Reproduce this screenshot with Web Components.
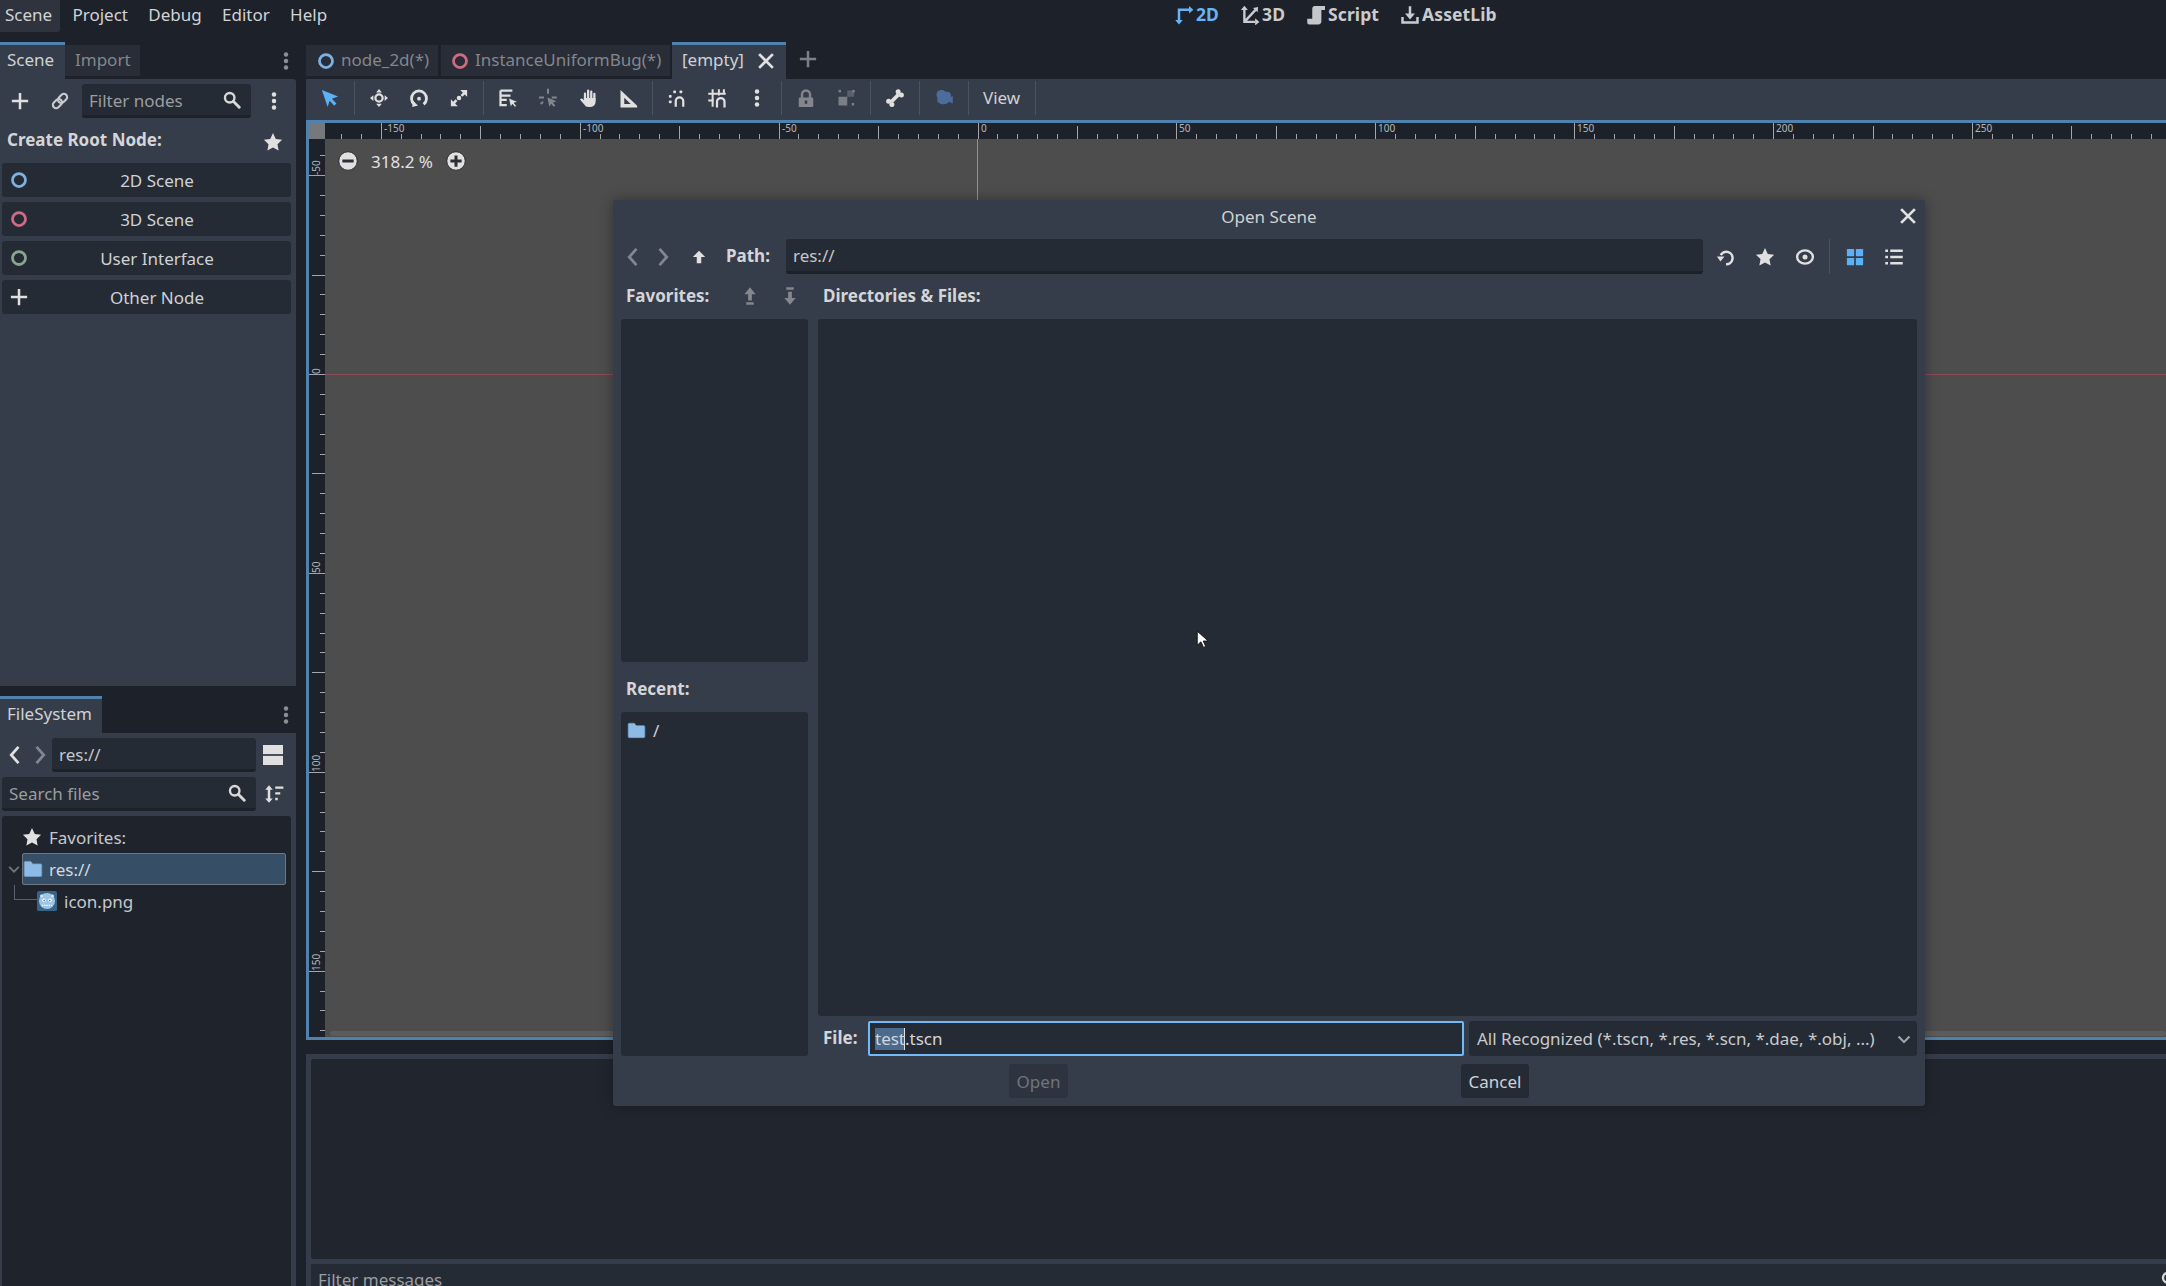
<!DOCTYPE html>
<html><head><meta charset="utf-8">
<style>
html,body{margin:0;padding:0;background:#1d222a;overflow:hidden}
body{font:17px/1.2 "Noto Sans",sans-serif;color:#cdcfd2}
</style></head><body>
<ge-app></ge-app>
<script>
const ICONS={
plus:'<path fill="C" d="M7 1.500h2v5.500h5.500v2H9v5.500H7V9H1.500V7H7z"/>',
link:'<g transform="rotate(-45 8 8)" fill="none" stroke="C" stroke-width="1.700"><rect x="1" y="5.400" width="8.200" height="5.200" rx="2.600"/><rect x="6.800" y="5.400" width="8.200" height="5.200" rx="2.600"/></g>',
search:'<circle cx="6.500" cy="6.500" r="4" fill="none" stroke="C" stroke-width="2"/><path d="M9.500 9.500l5 5" stroke="C" stroke-width="2.400" stroke-linecap="round"/>',
dots:'<circle cx="8" cy="2.800" r="1.800" fill="C"/><circle cx="8" cy="8" r="1.800" fill="C"/><circle cx="8" cy="13.200" r="1.800" fill="C"/>',
star:'<path fill="C" d="M8 .8l2.200 4.700 5.100.7-3.700 3.500.9 5.100L8 12.400l-4.500 2.400.9-5.100L.7 6.200l5.100-.7z"/>',
ring:'<circle cx="8" cy="8" r="5.200" fill="none" stroke="C" stroke-width="2.200"/>',
select:'<path fill="C" d="M1.500 1.500l13 5.200-5 1.800 3.600 3.900-1.700 1.700-3.700-3.900-1.600 5z"/>',
move:'<path fill="C" d="M8 .8l2.300 2.700H5.700zM8 15.200l2.300-2.700H5.700zM.8 8l2.700-2.300v4.600zM15.200 8l-2.700-2.300v4.600z"/><circle cx="8" cy="8" r="2.900" fill="none" stroke="C" stroke-width="1.800"/>',
rotate:'<path fill="none" stroke="C" stroke-width="2.200" d="M11.700 13.100a6 6 0 1 0-7.400 0"/><path fill="C" d="M2.600 15.200l.5-5 4.100 3.700z"/><circle cx="8" cy="8.500" r="1.500" fill="C"/>',
scale:'<path fill="C" d="M9 1.500h5.500V7l-1.900-1.900L10.700 7 9.300 5.600l1.800-1.900zM7 14.500H1.500V9l1.900 1.900L5.300 9l1.400 1.400-1.800 1.900z"/><circle cx="8" cy="8" r="1.800" fill="C"/>',
listsel:'<path fill="none" stroke="C" stroke-width="1.800" d="M2 2h9.500M2 2v11.600h5M2 6h8M2 9.500h5"/><path fill="C" stroke="#363d4a" stroke-width=".6" d="M8.500 8l7.300 3-2.900 1 1.900 2.400-1.300 1-1.900-2.400-1.500 2.400z"/>',
pivot:'<path stroke="C" stroke-width="1.600" d="M8 .5v4M.8 7.500h4M11 7.500h4"/><path fill="C" d="M7.500 7.500l7.300 3-2.900 1 1.900 2.400-1.300 1-1.900-2.400-1.500 2.400z"/><path stroke="C" stroke-width="1.600" d="M4 11l-1.800 1.800"/>',
pan:'<path fill="none" stroke="C" stroke-width="1.800" stroke-linecap="round" d="M5.600 9V4.400M8.100 9V2M10.600 9V2.800M13.100 10V4.600"/><path fill="C" d="M4.700 8h9.300v3.300a3.800 3.800 0 0 1-3.800 3.800H8.400c-1.700 0-2.400-.7-3.200-1.800L2 9.800c-.7-1 .6-2 1.500-1.200l1.200 1.100z"/>',
triangle:'<path fill="C" fill-rule="evenodd" d="M2 1.500l13.300 12.700v1.400H2zM5 7.700v5h5.200z"/>',
snap:'<path fill="none" stroke="C" stroke-width="1.800" d="M7 15v-4.500a3 3 0 0 1 6 0V15"/><g fill="C"><rect x="5" y="2" width="2.200" height="2.200" rx=".6"/><rect x="10" y="2" width="2.200" height="2.200" rx=".6"/><rect x="1.500" y="5.500" width="2.200" height="2.200" rx=".6"/><rect x="1.500" y="10" width="2.200" height="2.200" rx=".6"/></g>',
grid:'<path fill="none" stroke="C" stroke-width="1.600" d="M4.500 1v14M9.500 1v5M13.500 1v3.500M1 4.500h14M1 10h4.500"/><path fill="none" stroke="C" stroke-width="1.800" d="M8 15.500v-4.500a3 3 0 0 1 6 0v4.500"/>',
lock:'<path fill="C" fill-rule="evenodd" d="M3 7.500h10a.8.8 0 0 1 .8.800v6a.8.8 0 0 1-.8.800H3a.8.8 0 0 1-.8-.8v-6a.8.8 0 0 1 .8-.8zM7 10v2.500h2V10z"/><path fill="none" stroke="C" stroke-width="1.900" d="M4.800 8V5.200a3.200 3.200 0 0 1 6.400 0V8"/>',
group:'<g fill="C"><rect x="2" y="7" width="7" height="7"/><rect x="9" y="2" width="5.500" height="5" opacity=".55"/><rect x="2" y="1.500" width="2" height="2"/><rect x="12.500" y="12" width="2" height="2"/><rect x="13" y="1.500" width="2" height="2"/></g>',
bone:'<g fill="C"><path d="M4 9.900L9.900 4 12 6.100 6.100 12z"/><circle cx="10.500" cy="2.900" r="2"/><circle cx="13.100" cy="5.500" r="2"/><circle cx="2.900" cy="10.500" r="2"/><circle cx="5.500" cy="13.100" r="2"/></g>',
camera:'<g fill="C"><circle cx="6" cy="5.500" r="4"/><circle cx="10.500" cy="6" r="3"/><ellipse cx="7.500" cy="9.500" rx="5" ry="3.500"/><path d="M11 8.500l4-2.200v6l-4-2z"/></g>',
m2d:'<path fill="none" stroke="C" stroke-width="2" d="M4 13V3.800h8"/><path fill="C" d="M12 .8l3.500 3-3.500 3zM1 12h6l-3 3.500z"/>',
m3d:'<path fill="none" stroke="C" stroke-width="1.900" d="M3.500 4v9.500H12M3.500 13.500L12.800 3.500"/><path fill="C" d="M3.500.5l2.800 3.400H.7zM15.500 13.500l-3.400 2.800v-5.600zM14.500 1.500l-.4 4.300-3.700-3.400z"/>',
script:'<path fill="C" d="M6.500 .8H15.200V4H12.300V13A2.500 2.500 0 0 1 9.800 15.500H2.500A1.500 1.500 0 0 1 1 14V11H5V3A2.300 2.300 0 0 1 6.500 .8z"/>',
asset:'<path fill="none" stroke="C" stroke-width="2" d="M8 1v9M2 9.500V14h12V9.500"/><path fill="C" d="M4 6.800h8L8 11.500z"/>',
folder:'<path fill="#8dbbe6" stroke="#6c9ccb" stroke-width=".6" d="M1 2.800a.9.9 0 0 1 .9-.9h4.300l1.600 2h6.300a.9.9 0 0 1 .9.900v8.300a.9.900 0 0 1-.9.900H1.900a.9.900 0 0 1-.9-.9z"/>',
left:'<path fill="none" stroke="C" stroke-width="2.200" d="M10.800 1.500L5 8l5.800 6.500"/>',
right:'<path fill="none" stroke="C" stroke-width="2.200" d="M5.200 1.500L11 8l-5.800 6.500"/>',
split:'<rect width="16" height="7.300" fill="C"/><rect y="8.700" width="16" height="7.300" fill="C"/>',
sort:'<path fill="C" d="M4 1l3 3.500H5v7h2L4 15l-3-3.500h2v-7H1zM9 2h6.500v1.800H9zM9 6.500h4v1.800H9zM9 11h2v2H9z"/>',
down:'<path fill="none" stroke="C" stroke-width="2.200" d="M2.500 5.500L8 11l5.500-5.500"/>',
x:'<path stroke="C" stroke-width="2.200" d="M2.500 2.500l11 11M13.500 2.500l-11 11"/>',
up:'<path fill="C" d="M8 2.500l5.500 5.500H10v5.500H6V8H2.500z"/>',
favup:'<path fill="C" d="M8 1l4.500 5.500H9.500v5h-3v-5H3.500zM5 13h6v2H5z"/>',
favdown:'<path fill="C" d="M8 15l4.500-5.500H9.500v-5h-3v5H3.500zM5 1h6v2H5z"/>',
refresh:'<path fill="none" stroke="C" stroke-width="2" d="M3.800 6.500A5 5 0 1 1 8 13.800"/><path fill="C" d="M.8 7.600h6L3.500 11.500z"/>',
eye:'<ellipse cx="8" cy="8" rx="6.300" ry="5.300" fill="none" stroke="C" stroke-width="1.900"/><circle cx="8" cy="8" r="2" fill="C"/>',
tiles:'<g fill="C"><rect x="1.500" y="1.500" width="5.800" height="5.800" rx=".5"/><rect x="8.700" y="1.500" width="5.800" height="5.800" rx=".5"/><rect x="1.500" y="8.700" width="5.800" height="5.800" rx=".5"/><rect x="8.700" y="8.700" width="5.800" height="5.800" rx=".5"/></g>',
list:'<path fill="C" d="M1 2h2.200v2H1zM5 2h10v2H5zM1 7h2.200v2H1zM5 7h10v2H5zM1 12h2.200v2H1zM5 12h10v2H5z"/>',
godot:'<rect width="16" height="16" rx="1.500" fill="#3a6186"/><circle cx="8" cy="8" r="6.400" fill="#9cc5e6"/><circle cx="3.600" cy="3.900" r="1.100" fill="#dcecf8"/><circle cx="12.400" cy="3.900" r="1.100" fill="#dcecf8"/><circle cx="5.600" cy="7.400" r="1.400" fill="#fff"/><circle cx="10.400" cy="7.400" r="1.400" fill="#fff"/><circle cx="5.800" cy="7.500" r=".6" fill="#3a6186"/><circle cx="10.200" cy="7.500" r=".6" fill="#3a6186"/><path stroke="#fff" stroke-dasharray="1 .8" stroke-width="1" d="M4 11.500h8"/>',
cursor:'<path fill="#fff" stroke="#111" stroke-width=".8" d="M2 1l0 12.500 3.300-3 2.300 5 1.900-.9-2.200-4.800h4.400z"/>',
zminus:'<circle cx="8" cy="8" r="7.400" fill="#e0e0e0" stroke="#222" stroke-width=".7"/><rect x="3.500" y="6.800" width="9" height="2.400" fill="#2a2e35"/>',
zplus:'<circle cx="8" cy="8" r="7.400" fill="#e0e0e0" stroke="#222" stroke-width=".7"/><path fill="#2a2e35" d="M6.800 3.500h2.400v3.300h3.300v2.400H9.200v3.300H6.800V9.200H3.500V6.800h3.300z"/>'
};
class GeEl extends HTMLElement{
  constructor(){super();this.attachShadow({mode:'open'});const h=this.constructor.html;
    if(h)this.shadowRoot.innerHTML=h;}
}
function def(name,html){customElements.define(name,class extends GeEl{static html=html});}

customElements.define('ge-icon',class extends GeEl{
  connectedCallback(){
    const n=this.getAttribute('n'),c=this.getAttribute('c')||'#e0e0e0',s=this.getAttribute('s')||20,o=this.getAttribute('o')||1;
    this.shadowRoot.innerHTML=`<style>:host{display:inline-flex;align-items:center;justify-content:center;flex:none;width:${s}px;height:${s}px;opacity:${o}}svg{display:block}</style><svg width="${s}" height="${s}" viewBox="0 0 16 16">${(ICONS[n]||'').replace(/"C"/g,'"'+c+'"')}</svg>`;
  }
});

def('ge-ib',`<style>:host{display:flex;align-items:center;justify-content:center;flex:none;width:var(--w,40px);height:100%}</style><slot></slot>`);
def('ge-sep',`<style>:host{display:block;flex:none;width:1px;margin:2px 4px;background:#4c5360}</style>`);

def('ge-menu-item',`<style>:host{display:flex;align-items:center;height:32px;box-sizing:border-box;padding:0 8px 2px 5px;color:#d2d3d6;flex:none}
:host([hover]){background:#2e333d;border-radius:0 0 3px 0}</style><slot></slot>`);
def('ge-mode',`<style>:host{display:flex;align-items:center;gap:2px;height:29px;font-weight:700;font-size:17.5px;letter-spacing:.1px;color:var(--col,#c9cbce);flex:none}</style><slot></slot>`);
def('ge-topbar',`<style>:host{display:flex;height:42px;align-items:flex-start;background:#1d222a}
.menu{display:flex;width:1174px;gap:7.300px;flex:none}.modes{display:flex;gap:21px}</style>
<div class="menu"><ge-menu-item hover>Scene</ge-menu-item><ge-menu-item>Project</ge-menu-item><ge-menu-item>Debug</ge-menu-item><ge-menu-item>Editor</ge-menu-item><ge-menu-item>Help</ge-menu-item></div>
<div class="modes"><ge-mode style="--col:#66b4f5"><ge-icon n="m2d" c="#66b4f5"></ge-icon>2D</ge-mode><ge-mode><ge-icon n="m3d" c="#c9cbce"></ge-icon>3D</ge-mode><ge-mode><ge-icon n="script" c="#c4c6c9"></ge-icon>Script</ge-mode><ge-mode><ge-icon n="asset" c="#c9cbce"></ge-icon>AssetLib</ge-mode></div>`);

def('ge-tab',`<style>:host{display:flex;align-items:center;box-sizing:border-box;flex:none;height:31px;margin-top:3px;background:#282d37;color:#83868c;padding:0 var(--pr,10px) 0 var(--pl,10px);white-space:nowrap;gap:var(--gap,5px);width:var(--tw,auto)}
:host([on]){height:37px;margin-top:0;background:#363d4a;border-top:3px solid #4f82ae;color:#cfd1d4;padding-bottom:3px}</style><slot></slot>`);

def('ge-field',`<style>:host{display:flex;align-items:center;box-sizing:border-box;height:var(--h,34px);background:#252b34;border-bottom:3px solid #1d222a;border-radius:3px;padding:0 10px 0 7px;color:var(--fc,#c4c6ca);min-width:0;flex:var(--flex,none);width:var(--w,auto)}
.t{flex:1;white-space:nowrap;margin-top:var(--tm,4px)}</style><div class="t"><slot></slot></div><slot name="end"></slot>`);

def('ge-root-btn',`<style>:host{display:flex;align-items:center;height:34px;background:#252b34;border-radius:3px;padding:0 6px 0 7px;color:#cfd1d4;flex:none}
.t{flex:1;text-align:center;margin-top:2px}</style><slot name="i"></slot><div class="t"><slot></slot></div>`);

def('ge-scene-dock',`<style>:host{display:block;height:644px;flex:none}
.tabs{display:flex;height:37px;position:relative;align-items:flex-start}
.tabs ge-ib{margin-left:auto;height:31px;margin-top:3px;--w:20px;margin-right:0;padding-right:0}
.p{background:#363d4a;height:607px;display:flex;flex-direction:column;border-radius:0 3px 0 0}
.r{display:flex;height:34px;margin-top:5px;align-items:center}
.r ge-ib{height:34px}
.h{display:flex;align-items:center;justify-content:space-between;height:45px;box-sizing:border-box;padding:0 0 1px 7px;font-weight:700;color:#d4d5d8}
.l{display:flex;flex-direction:column;gap:5px;margin:0 5px 0 2px}
</style>
<div class="tabs"><ge-tab on style="--tw:65px;--pl:7px">Scene</ge-tab><ge-tab style="--tw:75px;--pl:10px">Import</ge-tab><ge-ib style="margin-right:0"><ge-icon n="dots" c="#8b8e93"></ge-icon></ge-ib><div style="width:0"></div></div>
<div class="p">
<div class="r"><ge-ib><ge-icon n="plus"></ge-icon></ge-ib><ge-ib><ge-icon n="link" c="#c8cacd"></ge-icon></ge-ib><ge-field style="margin-left:2px;--w:169px;--fc:#9a9da2">Filter nodes<ge-icon slot="end" n="search" c="#d8d8d8" s="19"></ge-icon></ge-field><ge-ib style="--w:45px"><ge-icon n="dots"></ge-icon></ge-ib></div>
<div class="h"><span>Create Root Node:</span><ge-ib style="--w:46px;height:20px;margin-top:3px"><ge-icon n="star"></ge-icon></ge-ib></div>
<div class="l">
<ge-root-btn><ge-icon slot="i" n="ring" c="#7eb0e2"></ge-icon>2D Scene</ge-root-btn>
<ge-root-btn><ge-icon slot="i" n="ring" c="#cf6c84"></ge-icon>3D Scene</ge-root-btn>
<ge-root-btn><ge-icon slot="i" n="ring" c="#8ba58c"></ge-icon>User Interface</ge-root-btn>
<ge-root-btn><ge-icon slot="i" n="plus"></ge-icon>Other Node</ge-root-btn>
</div></div>`);

def('ge-fs-dock',`<style>:host{display:block;flex:1;min-height:0}
.tabs{display:flex;height:37px;align-items:flex-start}
.tabs ge-ib{margin-left:auto;height:31px;margin-top:3px;--w:20px}
.p{background:#363d4a;height:553px;display:flex;flex-direction:column}
.r{display:flex;height:34px;align-items:center;margin-top:5px}
.r ge-ib{height:34px}
.tree{margin:5px 5px 0 2px;flex:1;background:#1f242c;border-radius:3px 3px 0 0;color:#c6c8cc;padding-top:5px;box-sizing:border-box}
.tree span{margin-top:2px}
.row{display:flex;align-items:center;height:32px}
.sel{display:flex;align-items:center;box-sizing:border-box;width:264px;height:32px;margin-left:1px;background:#364e66;border:1px solid #6d7680;border-radius:2px}
.g{width:23px;height:15px;margin-left:12px;border-left:1px solid #59606b;border-bottom:1px solid #59606b;box-sizing:border-box;align-self:flex-start}
</style>
<div class="tabs"><ge-tab on style="--tw:102px;--pl:7px">FileSystem</ge-tab><ge-ib><ge-icon n="dots" c="#8b8e93"></ge-icon></ge-ib></div>
<div class="p">
<div class="r"><ge-ib style="--w:25px;margin-left:2px"><ge-icon n="left"></ge-icon></ge-ib><ge-ib style="--w:25px"><ge-icon n="right" o=".45"></ge-icon></ge-ib><ge-field style="--w:204px">res://</ge-field><ge-ib style="--w:40px;margin-left:-3px"><ge-icon n="split"></ge-icon></ge-ib></div>
<div class="r"><ge-field style="margin-left:2px;--w:254px;--fc:#9a9da2">Search files<ge-icon slot="end" n="search" c="#d8d8d8" s="19"></ge-icon></ge-field><ge-ib style="--w:36px"><ge-icon n="sort"></ge-icon></ge-ib></div>
<div class="tree">
<div class="row" style="padding-left:20px;height:32px"><ge-icon n="star"></ge-icon><span style="margin-left:7px">Favorites:</span></div>
<div class="row"><ge-icon n="down" s="14" c="#6e747d" style="margin-left:5px"></ge-icon><div class="sel"><ge-icon n="folder"></ge-icon><span style="margin-left:6px;color:#d6d8da">res://</span></div></div>
<div class="row"><div class="g"></div><ge-icon n="godot"></ge-icon><span style="margin-left:7px">icon.png</span></div>
</div></div>`);

customElements.define('ge-ruler',class extends GeEl{
  connectedCallback(){
    const v=this.hasAttribute('vertical'),o=+this.getAttribute('origin'),len=+this.getAttribute('len');
    const step=19.89;let out='';
    for(let k=Math.ceil(-o/step);k*step+o<len;k++){
      const p=Math.round(k*step+o),mj=k%10==0,md=k%5==0;const sz=mj?16:md?13:5;
      if(v){out+=`<i style="top:${p}px;right:0;width:${sz}px;height:1px"></i>`;
        if(mj)out+=`<b class="vl" style="top:${p-24}px;">${k*5}</b>`;}
      else{out+=`<i style="left:${p}px;bottom:0;height:${sz}px;width:1px"></i>`;
        if(mj&&p<len-30)out+=`<b style="left:${p+3}px;top:0">${k*5}</b>`;}
    }
    this.shadowRoot.innerHTML=`<style>:host{display:block;position:relative;overflow:hidden;background:#1d222a;flex:none;${v?'width:16px;height:100%':'height:16px;flex:1'}}
i{position:absolute;background:#a3a5a8}
b{position:absolute;font:400 10px/11px "Noto Sans",sans-serif;color:#b4b6b9;white-space:nowrap}
.vl{left:1px;height:24px;width:12px;writing-mode:vertical-rl;transform:rotate(180deg);line-height:12px;text-align:left}</style>${out}`;
  }
});

def('ge-toolbar',`<style>:host{display:flex;height:41px;padding-left:4px;background:#363d4a;flex:none;align-items:stretch}
ge-sep{height:34px;margin-top:2px}
ge-ib{height:38px}
.v{display:flex;align-items:center;padding:1px 10px 0;box-sizing:content-box;height:37px;color:#cfd1d4}</style>
<ge-ib><ge-icon n="select" c="#5cb0f5"></ge-icon></ge-ib><ge-sep></ge-sep>
<ge-ib><ge-icon n="move"></ge-icon></ge-ib><ge-ib><ge-icon n="rotate"></ge-icon></ge-ib><ge-ib><ge-icon n="scale"></ge-icon></ge-ib><ge-sep></ge-sep>
<ge-ib><ge-icon n="listsel"></ge-icon></ge-ib><ge-ib><ge-icon n="pivot" o=".45"></ge-icon></ge-ib><ge-ib><ge-icon n="pan"></ge-icon></ge-ib><ge-ib><ge-icon n="triangle"></ge-icon></ge-ib><ge-sep></ge-sep>
<ge-ib><ge-icon n="snap"></ge-icon></ge-ib><ge-ib><ge-icon n="grid"></ge-icon></ge-ib><ge-ib><ge-icon n="dots"></ge-icon></ge-ib><ge-sep></ge-sep>
<ge-ib><ge-icon n="lock" o=".45"></ge-icon></ge-ib><ge-ib><ge-icon n="group" o=".4"></ge-icon></ge-ib><ge-sep></ge-sep>
<ge-ib><ge-icon n="bone"></ge-icon></ge-ib><ge-sep></ge-sep>
<ge-ib><ge-icon n="camera" c="#4c6d9c"></ge-icon></ge-ib><ge-sep></ge-sep>
<div class="v" style="width:38px">View</div><ge-sep></ge-sep>`);

def('ge-viewport',`<style>:host{display:flex;flex-direction:column;height:920px;box-sizing:border-box;border:solid #4f82ae;border-width:3px 0 3px 3px;flex:none}
.top{display:flex;height:16px;flex:none}.corner{width:16px;background:#77787c;flex:none}
.main{display:flex;flex:1;min-height:0}
.cv{flex:1;background:#4d4d4d;position:relative;overflow:hidden}
.ox{position:absolute;left:652px;top:0;bottom:0;width:1px;background:#8c9c72}
.oy{position:absolute;left:0;right:0;top:235px;height:1px;background:#8c4a58}
.zoom{position:absolute;left:13px;top:12px;display:flex;align-items:center;height:20px;color:#e0e0e0}
.sb{position:absolute;left:5px;right:0;bottom:1px;height:5px;background:#5c5c5c;border-radius:3px}</style>
<div class="top"><div class="corner"></div><ge-ruler origin="652.500" len="1841"></ge-ruler></div>
<div class="main"><ge-ruler vertical origin="235" len="898"></ge-ruler><div class="cv"><div class="ox"></div><div class="oy"></div>
<div class="zoom"><ge-icon n="zminus"></ge-icon><span style="margin:2px 13px 0 13px;width:62px;white-space:nowrap">318.2 %</span><ge-icon n="zplus"></ge-icon></div><div class="sb"></div></div></div>`);

def('ge-log',`<style>:host{display:flex;flex-direction:column;height:232px;flex:none;background:#363d4a;padding:5px 0 0 5px;box-sizing:border-box;overflow:hidden;margin-top:14px}
.m{height:200px;background:#21262e;flex:none;border-radius:3px 0 0 3px}
.f{display:flex;height:36px;margin-top:5px;background:#252b34;color:#9a9da2;padding:6px 0 0 7px;box-sizing:border-box;justify-content:space-between;flex:none}
</style><div class="m"></div><div class="f"><span>Filter messages</span><ge-icon n="search" c="#d8d8d8" s="19" style="margin-right:-13px"></ge-icon></div>`);

def('ge-scene-tabs',`<style>:host{display:flex;height:37px;gap:3px;flex:none;align-items:flex-start}
ge-tab ge-icon{margin-left:-1px}</style>
<ge-tab style="--tw:132px;--pl:10px;--gap:5px"><ge-icon n="ring"  c="#7eb0e2" style="margin-left:0"></ge-icon>node_2d(*)</ge-tab>
<ge-tab style="--tw:229px;--pl:10px;margin-left:0"><ge-icon n="ring" c="#cf6c84"></ge-icon>InstanceUniformBug(*)</ge-tab>
<ge-tab on style="--tw:114px;--pl:10px;--gap:13px;margin-left:-1px">[empty]<ge-icon n="x"></ge-icon></ge-tab>
<ge-ib style="height:37px;margin-left:0;margin-top:-2px;--w:38px"><ge-icon n="plus" c="#7d8187"></ge-icon></ge-ib>`);

def('ge-btn',`<style>:host{display:flex;align-items:center;justify-content:center;height:34px;padding:2px var(--pad,7px) 0;background:var(--bg,#252b34);color:var(--col,#cfd1d4);border-radius:3px;flex:none;box-sizing:border-box}</style><slot></slot>`);

def('ge-dialog',`<style>:host{display:flex;flex-direction:column;position:absolute;left:613px;top:200px;width:1312px;height:906px;box-sizing:border-box;padding:0 8px;background:#363d4a;border-radius:3px;box-shadow:0 0 14px rgba(0,0,0,.35);color:#cfd1d4}
.title{display:flex;height:39px;align-items:center;justify-content:center;position:relative;flex:none;padding-bottom:4px;box-sizing:border-box}
.close{position:absolute;right:-1px;top:6px}
.path{display:flex;height:35px;align-items:center;flex:none;margin-right:9px}
.path ge-ib{height:35px}
b{font-weight:700;color:#d4d5d8}
.path ge-field{flex:1;--h:35px;height:35px;--tm:3px}
.cols{display:grid;grid-template-columns:187px 1099px;column-gap:10px;flex:none;height:777px;margin-top:5px}
.c{display:flex;flex-direction:column;height:777px}
.h{height:40px;display:flex;align-items:center;flex:none;padding:0 0 6px 5px;box-sizing:border-box}
.list{background:#252b34;border-radius:3px;flex:none}
.fr{display:flex;align-items:center;height:35px;margin-top:5px;flex:none}
.inp{width:596px;height:35px;box-sizing:border-box;border:2px solid #70bafa;border-radius:2px;background:#252b34;display:flex;align-items:center;padding:1px 0 0 5px;color:#d4d5d8;flex:none;margin-left:10px}
.s{background:#4a6a8e;height:22px;border-right:1px solid #e0e0e0;display:inline-block;line-height:22px;width:29px;}
.dd{width:448px;height:35px;background:#252b34;border-radius:3px;margin-left:5px;display:flex;align-items:center;padding:1px 5px 0 8px;box-sizing:border-box;justify-content:space-between;flex:none;white-space:nowrap;color:#c8cace}
.bt{display:flex;gap:393px;margin:8px 0 0 388px;flex:none}
</style>
<div class="title">Open Scene<ge-icon class="close" n="x" s="20"></ge-icon></div>
<div class="path">
<ge-ib style="--w:24px"><ge-icon n="left" o=".45"></ge-icon></ge-ib><ge-ib style="--w:36px"><ge-icon n="right" o=".45"></ge-icon></ge-ib><ge-ib style="--w:35px"><ge-icon n="up" s="18"></ge-icon></ge-ib>
<b style="margin-left:10px;margin-right:16px;white-space:nowrap">Path:</b>
<ge-field>res://</ge-field>
<ge-ib style="--w:46px"><ge-icon n="refresh"></ge-icon></ge-ib><ge-ib style="--w:32px"><ge-icon n="star"></ge-icon></ge-ib><ge-ib style="--w:48px"><ge-icon n="eye"></ge-icon></ge-ib>
<ge-sep style="height:35px;margin:0 0"></ge-sep>
<ge-ib style="--w:50px"><ge-icon n="tiles" c="#5cb0f5"></ge-icon></ge-ib><ge-ib style="--w:28px"><ge-icon n="list"></ge-icon></ge-ib>
</div>
<div class="cols">
<div class="c">
<div class="h"><b style="width:114px;flex:none">Favorites:</b><ge-icon n="favup" o=".45"></ge-icon><ge-icon n="favdown" o=".45" style="margin-left:20px"></ge-icon></div>
<div class="list" style="height:343px"></div>
<div class="h" style="height:50px;padding:4px 0 0 5px"><b>Recent:</b></div>
<div class="list" style="height:344px;padding:9px 6px;box-sizing:border-box;display:flex;align-items:flex-start"><ge-icon n="folder" s="19"></ge-icon><span style="margin-left:7px;line-height:19px">/</span></div>
</div>
<div class="c">
<div class="h" style="padding-left:5px"><b>Directories &amp; Files:</b></div>
<div class="list" style="height:697px"></div>
<div class="fr"><b style="margin-left:5px;width:35px;flex:none">File:</b><div class="inp"><span class="s">test</span>.tscn</div><div class="dd">All Recognized (*.tscn, *.res, *.scn, *.dae, *.obj, ...)<ge-icon n="down" s="16" c="#9ea1a6"></ge-icon></div></div>
</div></div>
<div class="bt"><ge-btn style="--bg:#2e343f;--col:#6f747c;--pad:0;width:59px">Open</ge-btn><ge-btn style="--pad:0;width:68px">Cancel</ge-btn></div>`);

def('ge-app',`<style>:host{display:block;position:relative;width:2166px;height:1286px;overflow:hidden;background:#1d222a}
.b{display:flex;height:1244px}
.l{width:296px;flex:none;display:flex;flex-direction:column;gap:10px;margin-right:10px;height:1244px}
.r{flex:1;min-width:0;display:flex;flex-direction:column}
.cur{position:absolute;left:1195px;top:630px}</style>
<ge-topbar></ge-topbar>
<div class="b"><div class="l"><ge-scene-dock></ge-scene-dock><ge-fs-dock></ge-fs-dock></div>
<div class="r"><ge-scene-tabs></ge-scene-tabs><ge-toolbar></ge-toolbar><ge-viewport></ge-viewport><ge-log></ge-log></div></div>
<ge-dialog></ge-dialog>
<ge-icon class="cur" n="cursor" s="18"></ge-icon>`);
</script>
</body></html>
